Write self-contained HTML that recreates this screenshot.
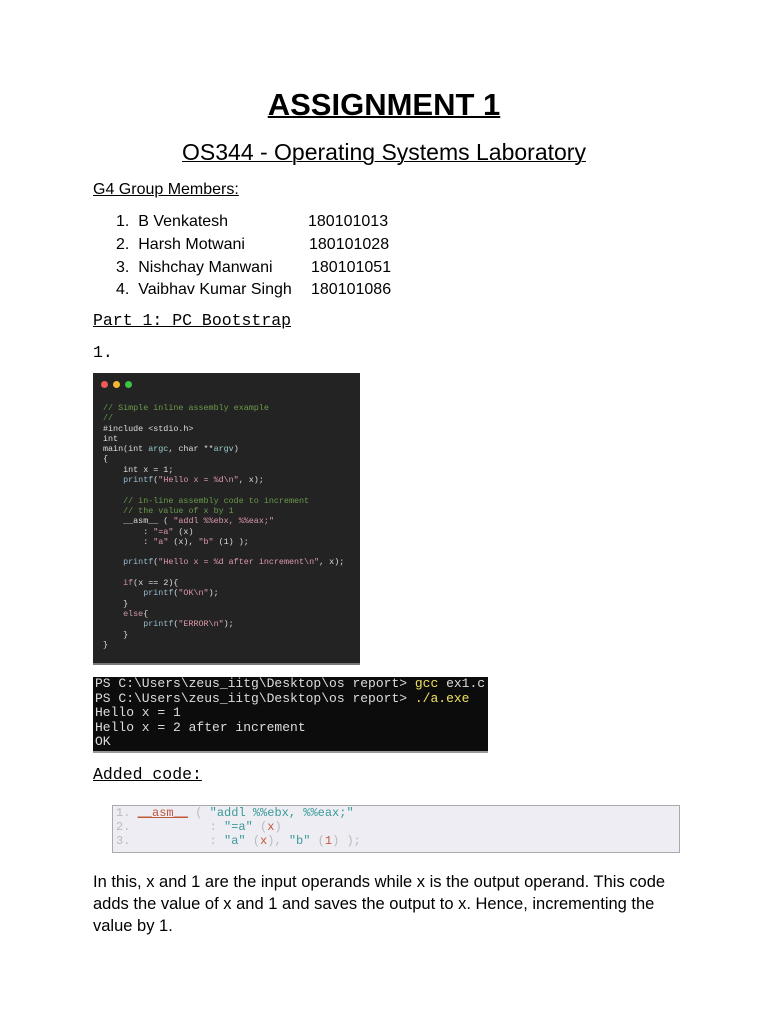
<!DOCTYPE html>
<html><head><style>
body{margin:0;background:#fff;width:768px;height:1024px;position:relative;font-family:"Liberation Sans",sans-serif;color:#000;overflow:hidden}
.a{position:absolute;white-space:pre}
.m{font-family:"Liberation Mono",monospace}
</style></head><body>
<div class="a" style="left:0;width:768px;text-align:center;top:87px;font-size:31px;font-weight:bold;text-decoration:underline;text-decoration-thickness:2px">ASSIGNMENT 1</div>
<div class="a" style="left:0;width:768px;text-align:center;top:139px;font-size:23px;text-decoration:underline;text-decoration-thickness:1px">OS344 - Operating Systems Laboratory</div>
<div class="a" style="left:93px;top:181px;font-size:16px;text-decoration:underline">G4 Group Members:</div>
<div class="a" style="left:116px;top:213px;font-size:16px">1.  B Venkatesh</div><div class="a" style="left:308px;top:213px;font-size:16px">180101013</div>
<div class="a" style="left:116px;top:236px;font-size:16px">2.  Harsh Motwani</div><div class="a" style="left:309px;top:236px;font-size:16px">180101028</div>
<div class="a" style="left:116px;top:259px;font-size:16px">3.  Nishchay Manwani</div><div class="a" style="left:311px;top:259px;font-size:16px">180101051</div>
<div class="a" style="left:116px;top:281px;font-size:16px">4.  Vaibhav Kumar Singh</div><div class="a" style="left:311px;top:281px;font-size:16px">180101086</div>
<div class="a m" style="left:93px;top:311px;font-size:16.5px;text-decoration:underline">Part 1: PC Bootstrap</div>
<div class="a m" style="left:93px;top:343px;font-size:16.5px">1.</div>

<div class="a" style="left:93px;top:373px;width:267px;height:290px;background:#232323;border-bottom:2px solid #777"></div>
<div class="a" style="left:101px;top:381px;width:7px;height:7px;border-radius:50%;background:#f05b56"></div>
<div class="a" style="left:113px;top:381px;width:7px;height:7px;border-radius:50%;background:#f6b630"></div>
<div class="a" style="left:125px;top:381px;width:7px;height:7px;border-radius:50%;background:#3ec443"></div>
<div class="a m" style="left:103px;top:403px;font-size:8.4px;line-height:10.3px;color:#ddd"><span style="color:#6a9a4a">// Simple inline assembly example
//</span>
#include &lt;stdio.h&gt;
int
main(int <span style="color:#9cc">argc</span>, char **<span style="color:#9cc">argv</span>)
{
    int x = 1;
    <span style="color:#9bc">printf</span>(<span style="color:#d9a">"Hello x = %d\n"</span>, x);

    <span style="color:#6a9a4a">// in-line assembly code to increment
    // the value of x by 1</span>
    __asm__ ( <span style="color:#d9a">"addl %%ebx, %%eax;"</span>
        : <span style="color:#d9a">"=a"</span> (x)
        : <span style="color:#d9a">"a"</span> (x), <span style="color:#d9a">"b"</span> (1) );

    <span style="color:#9bc">printf</span>(<span style="color:#d9a">"Hello x = %d after increment\n"</span>, x);

    <span style="color:#c9a">if</span>(x == 2){
        <span style="color:#9bc">printf</span>(<span style="color:#d9a">"OK\n"</span>);
    }
    <span style="color:#c9a">else</span>{
        <span style="color:#9bc">printf</span>(<span style="color:#d9a">"ERROR\n"</span>);
    }
}</div>

<div class="a" style="left:93px;top:677px;width:395px;height:74px;background:#0c0c0c;border-bottom:2px solid #999"></div>
<div class="a m" style="left:95px;top:677px;font-size:13px;line-height:14.6px;color:#ddd">PS C:\Users\zeus_iitg\Desktop\os report&gt; <span style="color:#f0e060">gcc</span> ex1.c
PS C:\Users\zeus_iitg\Desktop\os report&gt; <span style="color:#f0e060">./a.exe</span>
Hello x = 1
Hello x = 2 after increment
OK</div>

<div class="a m" style="left:93px;top:765px;font-size:16.5px;text-decoration:underline">Added code:</div>

<div class="a" style="left:112px;top:805px;width:566px;height:46px;background:#eeedf3;border:1px solid #aaa"></div>
<div class="a m" style="left:116px;top:806px;font-size:12px;line-height:14px;color:#bbb">1. <span style="color:#c0583a;text-decoration:underline">__asm__</span> ( <span style="color:#3a9a9a">"addl %%ebx, %%eax;"</span>
2.           : <span style="color:#3a9a9a">"=a"</span> (<span style="color:#c0583a">x</span>)
3.           : <span style="color:#3a9a9a">"a"</span> (<span style="color:#c0583a">x</span>), <span style="color:#3a9a9a">"b"</span> (<span style="color:#c0583a">1</span>) );</div>

<div class="a" style="left:93px;top:871px;font-size:16.5px;line-height:22px">In this, x and 1 are the input operands while x is the output operand. This code
adds the value of x and 1 and saves the output to x. Hence, incrementing the
value by 1.</div>
</body></html>
